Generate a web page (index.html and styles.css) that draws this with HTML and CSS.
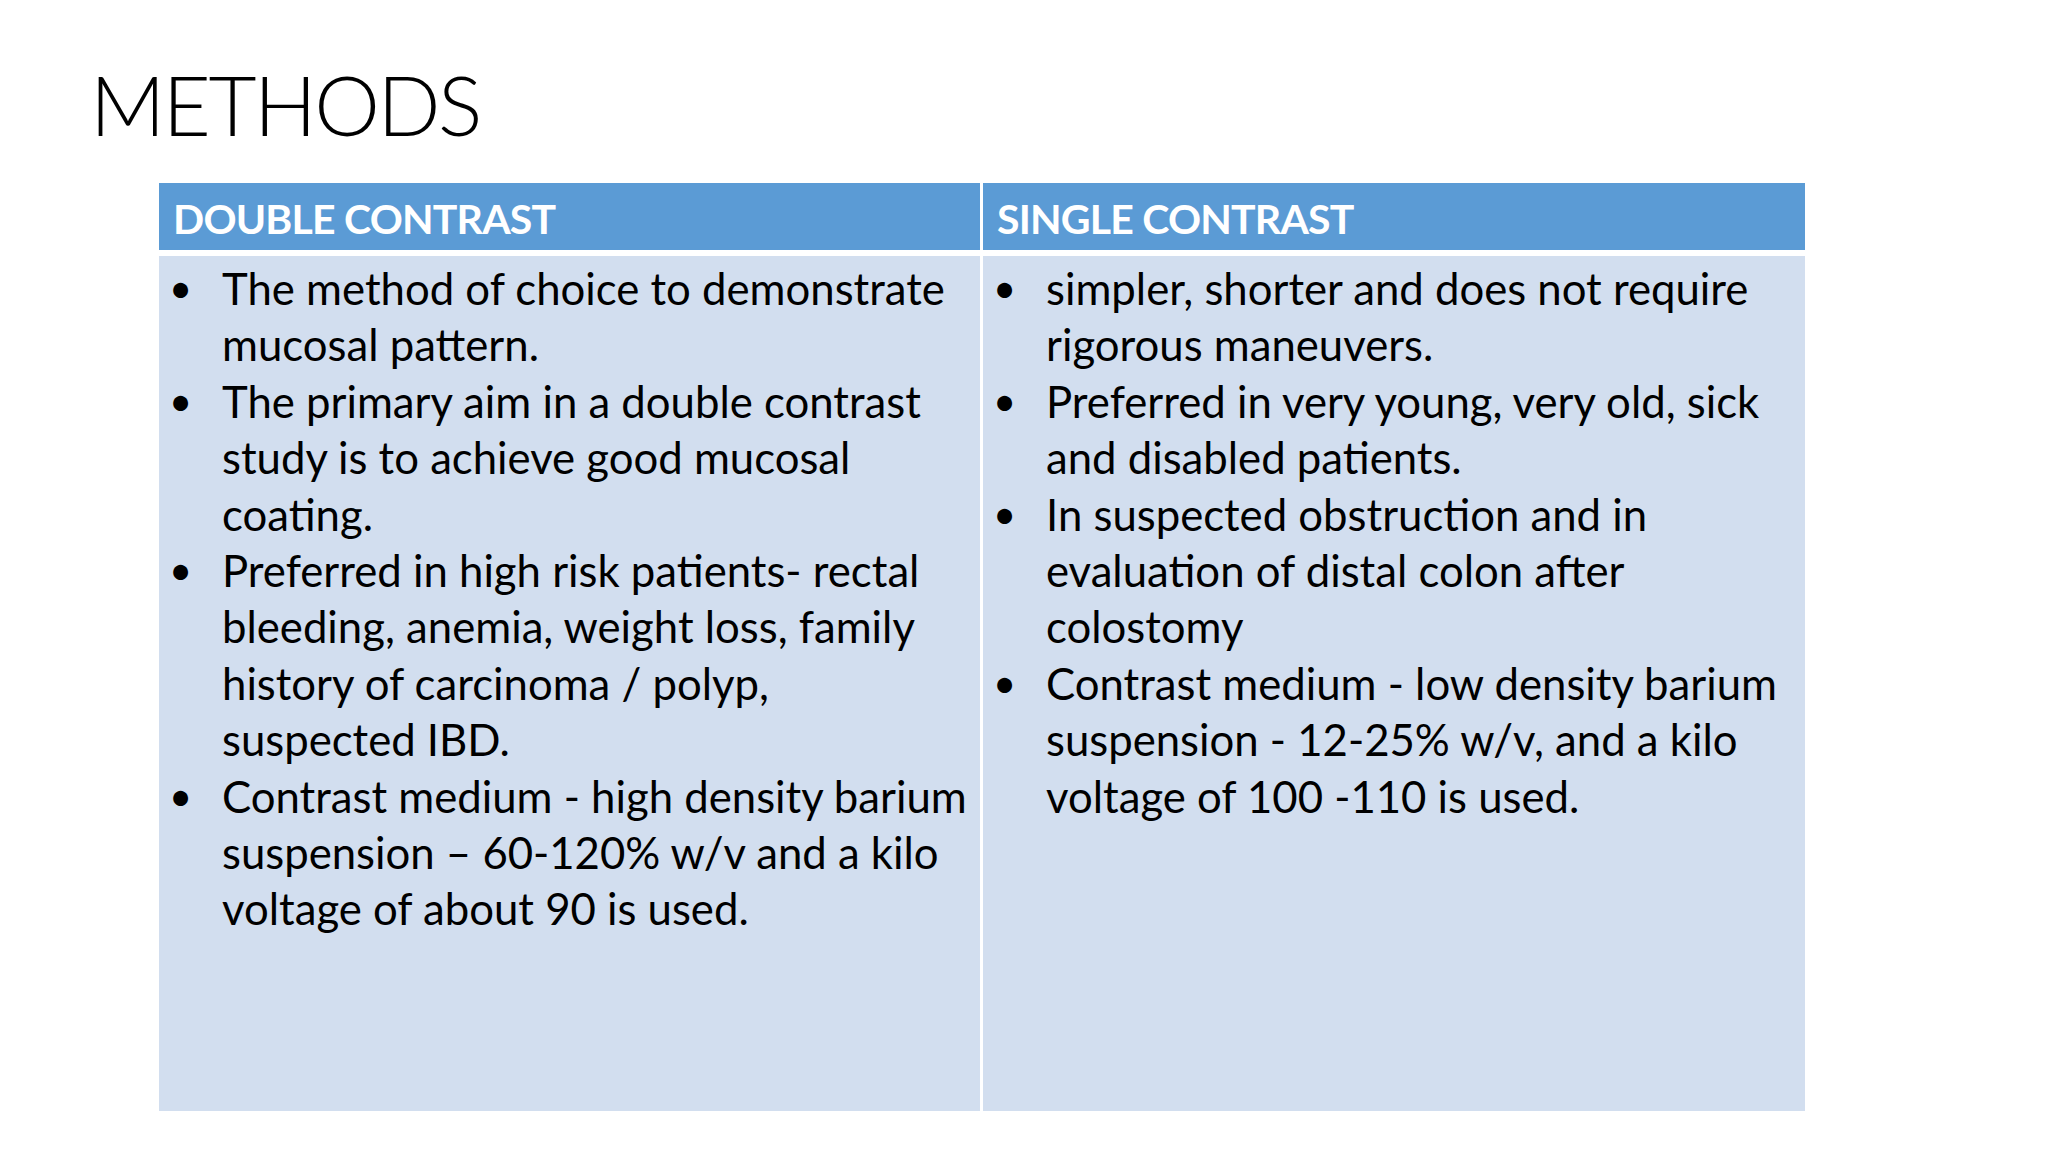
FILE: index.html
```html
<!DOCTYPE html>
<html lang="en">
<head>
<meta charset="utf-8">
<title>METHODS</title>
<link rel="stylesheet" href="styles.css">
</head>
<body>
<main class="slide">
  <h1 class="title">METHODS</h1>
  <section class="table">
    <div class="th">DOUBLE CONTRAST</div>
    <div class="th">SINGLE CONTRAST</div>
    <div class="td">
      <ul class="list">
        <li>The method of choice to demonstrate<br>mucosal pattern.</li>
        <li>The primary aim in a double contrast<br>study is to achieve good mucosal<br>coating.</li>
        <li>Preferred in high risk patients- rectal<br>bleeding, anemia, weight loss, family<br>history of carcinoma / polyp,<br>suspected IBD.</li>
        <li>Contrast medium - high density barium<br>suspension – 60-120% w/v and a kilo<br>voltage of about 90 is used.</li>
      </ul>
    </div>
    <div class="td">
      <ul class="list">
        <li>simpler, shorter and does not require<br>rigorous maneuvers.</li>
        <li>Preferred in very young, very old, sick<br>and disabled patients.</li>
        <li>In suspected obstruction and in<br>evaluation of distal colon after<br>colostomy</li>
        <li>Contrast medium - low density barium<br>suspension - 12-25% w/v, and a kilo<br>voltage of 100 -110 is used.</li>
      </ul>
    </div>
  </section>
</main>
</body>
</html>
```
FILE: styles.css
```css
html, body {
  margin: 0;
  padding: 0;
  background: #ffffff;
}

body {
  font-family: Lato, "Open Sans", "Liberation Sans", sans-serif;
  color: #000000;
}

.slide {
  width: 2048px;
  height: 1152px;
  overflow: hidden;
}

.title {
  margin: 0 0 37px 90px;
  padding-top: 63px;
  font-size: 83px;
  font-weight: 300;
  line-height: 83px;
  letter-spacing: -2.5px;
}

.table {
  margin-left: 159px;
  width: 1646px;
  display: grid;
  grid-template-columns: 821px 822px;
  grid-template-rows: 67px 855px;
  column-gap: 3px;
  row-gap: 6px;
  background: #ffffff;
}

.th {
  background: #5b9bd5;
  color: #ffffff;
  font-weight: 700;
  font-size: 41px;
  line-height: 67px;
  letter-spacing: -0.8px;
  padding: 2px 0 0 14px;
  box-sizing: border-box;
  white-space: nowrap;
  overflow: hidden;
}

.td {
  background: #d2deef;
  padding: 4px 0 0 10px;
}

.list {
  list-style: none;
  margin: 0;
  padding: 0;
  font-size: 43.7px;
  line-height: 56.4px;
  white-space: nowrap;
}

.list li {
  display: flex;
}

.list li::before {
  content: "•";
  flex: 0 0 53px;
  font-size: 40px;
}
```
